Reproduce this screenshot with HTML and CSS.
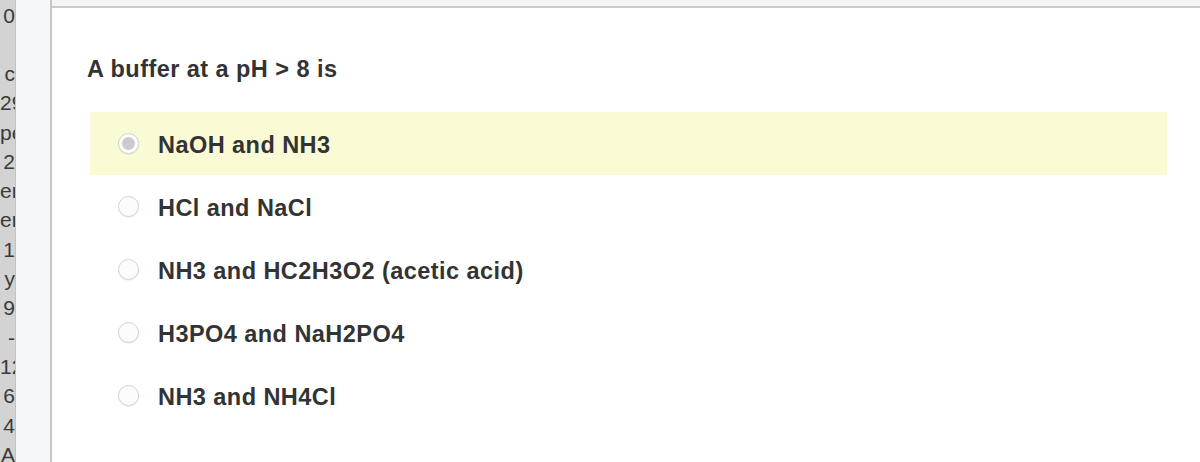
FILE: index.html
```html
<!DOCTYPE html>
<html>
<head>
<meta charset="utf-8">
<link rel="stylesheet" href="styles.css">
</head>
<body>
<div class="page">
  <div class="edge">
    <div class="edge-text">
      <div class="l l0">0</div>
      <div class="l l1">c</div>
      <div class="l">29</div>
      <div class="l">pe</div>
      <div class="l">2</div>
      <div class="l">er</div>
      <div class="l">er</div>
      <div class="l">1</div>
      <div class="l">y</div>
      <div class="l">9</div>
      <div class="l">-</div>
      <div class="l">12</div>
      <div class="l">6</div>
      <div class="l">4</div>
      <div class="l">A</div>
    </div>
  </div>
  <div class="gutter"></div>
  <div class="main">
    <div class="topbar"></div>
    <div class="content">
      <div class="question">A buffer at a pH &gt; 8 is</div>
      <div class="options">
        <div class="option selected"><span class="radio"></span><span class="label">NaOH and NH3</span></div>
        <div class="option"><span class="radio"></span><span class="label">HCl and NaCl</span></div>
        <div class="option"><span class="radio"></span><span class="label">NH3 and HC2H3O2 (acetic acid)</span></div>
        <div class="option"><span class="radio"></span><span class="label">H3PO4 and NaH2PO4</span></div>
        <div class="option"><span class="radio"></span><span class="label">NH3 and NH4Cl</span></div>
      </div>
    </div>
  </div>
</div>
</body>
</html>
```
FILE: styles.css
```css
html, body {
  margin: 0;
  padding: 0;
  background: #ffffff;
}
body {
  font-family: "Liberation Sans", Arial, sans-serif;
  color: #333333;
  width: 1200px;
  height: 462px;
  overflow: hidden;
}
.page {
  display: flex;
  height: 462px;
}
.edge {
  width: 16px;
  background: #d3d3d3;
  border-right: 1px solid #c2c2c2;
  overflow: hidden;
  box-sizing: border-box;
}
.edge-text {
  width: 15px;
  text-align: right;
  font-size: 21px;
  color: #3a3a3a;
  white-space: nowrap;
}
.l {
  height: 29.3px;
  line-height: 29.3px;
}
.l0 {
  margin-top: 1px;
  height: 30px;
}
.l1 {
  margin-top: 28px;
}
.gutter {
  width: 34px;
  background: #f6f7f9;
}
.main {
  flex: 1;
  border-left: 2px solid #c6c6c6;
  display: flex;
  flex-direction: column;
}
.topbar {
  height: 6px;
  background: #f4f4f4;
  border-bottom: 2px solid #c9c9c9;
}
.content {
  padding: 46px 33px 0 35px;
}
.question {
  font-size: 23.5px;
  letter-spacing: 0.45px;
  font-weight: bold;
  line-height: 30px;
  color: #333333;
}
.options {
  margin-top: 28px;
  margin-left: 3px;
}
.option {
  height: 63px;
  display: flex;
  align-items: center;
  padding-left: 28px;
}
.option.selected {
  background: #fafad4;
}
.radio {
  width: 19px;
  height: 19px;
  border-radius: 50%;
  border: 1.5px solid #d2d2d2;
  background: #fcfcfc;
  box-shadow: 0 1px 1px rgba(0,0,0,0.06);
  flex: none;
  position: relative;
}
.option.selected .radio {
  background: #ffffff;
  border-color: #d0d0d0;
}
.option.selected .radio::after {
  content: "";
  position: absolute;
  left: 3px;
  top: 3px;
  width: 13px;
  height: 13px;
  border-radius: 50%;
  background: #cbcbcb;
}
.label {
  margin-left: 19px;
  padding-top: 3px;
  font-size: 23.5px;
  letter-spacing: 0.45px;
  font-weight: bold;
  color: #333333;
}
```
